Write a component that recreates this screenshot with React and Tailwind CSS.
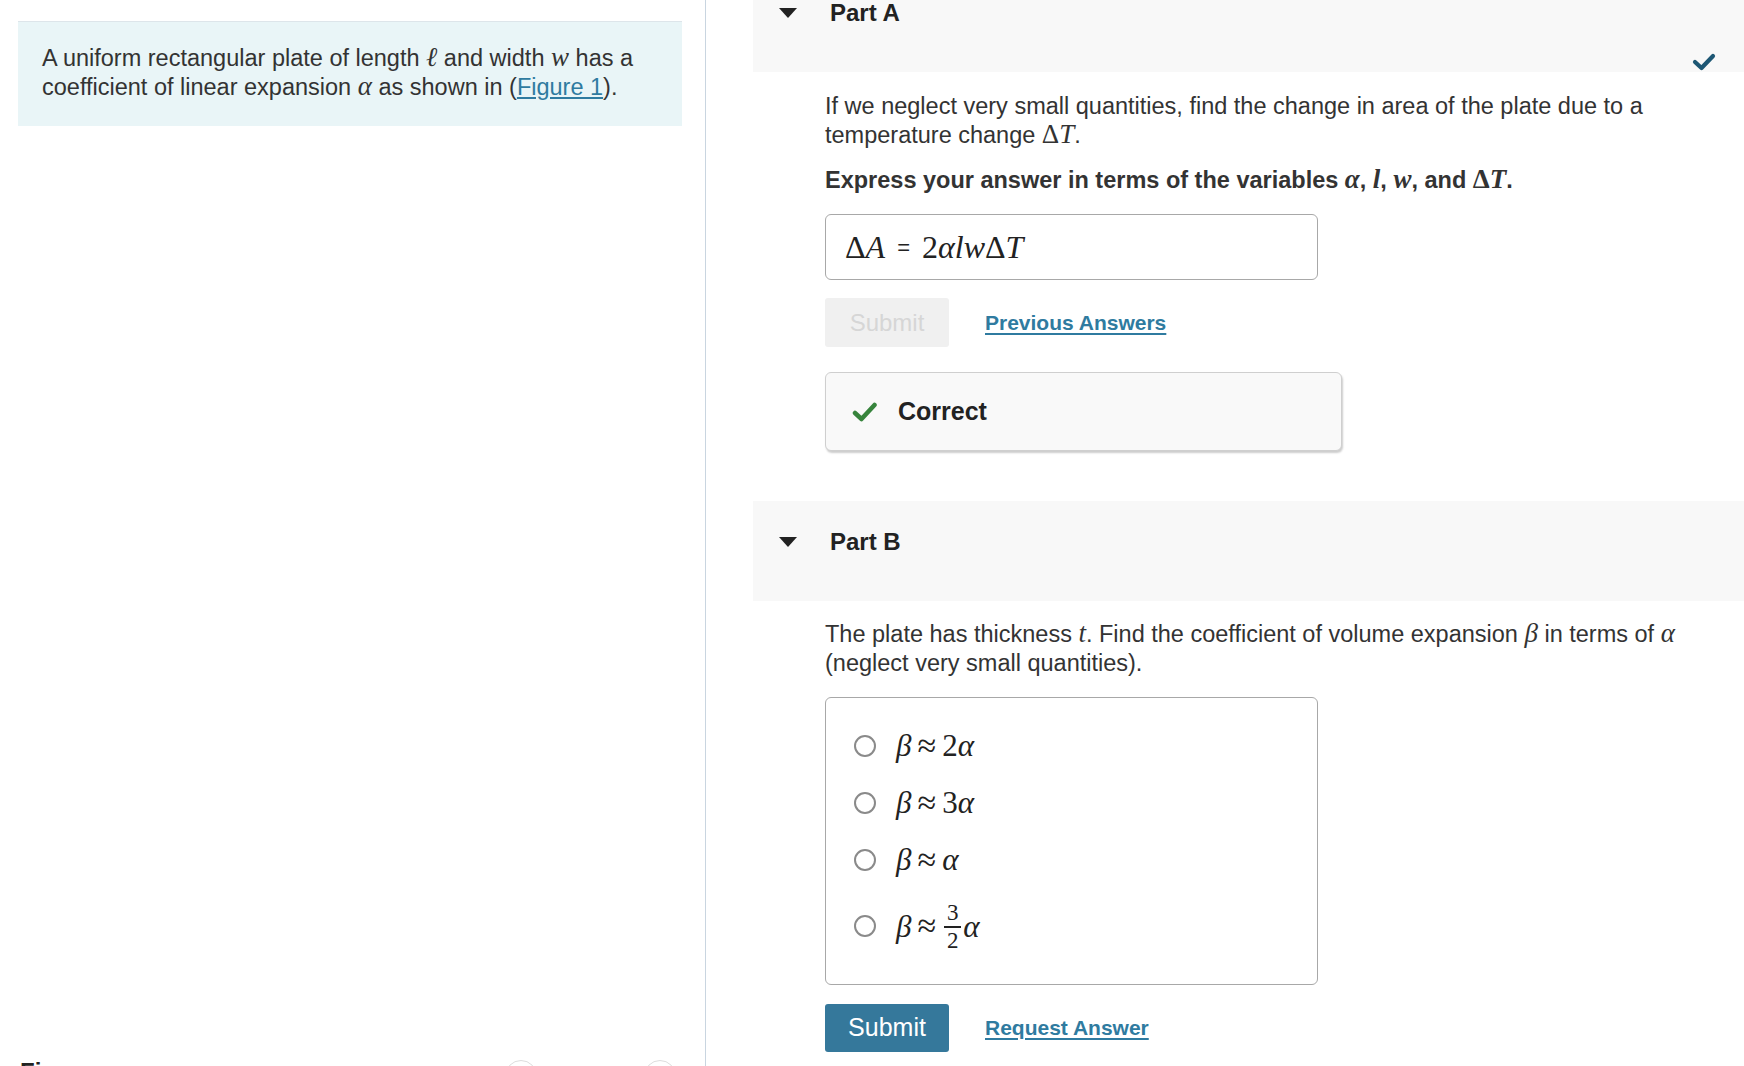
import React from 'react';

const sans = { fontFamily: "'Liberation Sans', Arial, sans-serif" };
const math = { fontFamily: "'Liberation Serif', 'DejaVu Serif', serif" };

function M({ children, italic = true }) {
  return (
    <span style={math} className={`text-[1.15em] leading-none ${italic ? 'italic' : ''}`}>
      {children}
    </span>
  );
}

function Caret() {
  return (
    <svg width="20" height="12" viewBox="0 0 20 12" className="shrink-0">
      <path d="M1 1 L19 1 L10 11 Z" fill="#222" />
    </svg>
  );
}

function PartHeader({ title, done }) {
  return (
    <div className="relative h-[100px] bg-[#f8f8f8] flex items-start pt-[29px] pl-[25px]">
      <div className="flex items-center h-[24px] gap-[32px]">
        <Caret />
        <span className="text-[24px] font-bold text-[#222]">{title}</span>
      </div>
      {done && (
        <svg
          width="24"
          height="20"
          viewBox="0 0 24 20"
          className="absolute right-[28px] bottom-[0px]"
        >
          <path d="M3 10 L9.5 16 L21 4" stroke="#1d5774" strokeWidth="4.2" fill="none" strokeLinecap="round" strokeLinejoin="round" />
        </svg>
      )}
    </div>
  );
}

function Radio({ children, h }) {
  return (
    <label className={`flex items-center gap-[20px] ${h}`}>
      <span className="w-[22px] h-[22px] rounded-full border-2 border-[#8a8a8a] bg-white shrink-0" />
      <span style={math} className="text-[31px] leading-none text-[#222] flex items-center">
        {children}
      </span>
    </label>
  );
}

function Approx() {
  return <span className="mx-[6px] not-italic text-[34px] leading-none">≈</span>;
}

function Frac({ n, d }) {
  return (
    <span className="inline-flex flex-col items-center mx-[2px] leading-none not-italic text-[23px]">
      <span className="pb-[2px]">{n}</span>
      <span className="w-[17px] h-[2px] bg-[#222]" />
      <span className="pt-[1px]">{d}</span>
    </span>
  );
}

export default function App() {
  return (
    <div style={sans} className="h-screen w-full overflow-hidden bg-white flex text-[#333]">
      {/* left column */}
      <div className="w-[706px] shrink-0 border-r border-[#c9d5e0] flex flex-col">
        <div className="shrink-0 ml-[18px] mt-[21px] w-[664px] h-[105px] bg-[#e9f5f7] border-t border-[#dde5ea] pl-[24px] pt-[22px] text-[23.5px] leading-[29px] text-[#333]">
          A uniform rectangular plate of length <M>ℓ</M> and width <M>w</M> has a
          <br />
          coefficient of linear expansion <M>α</M> as shown in (
          <a className="text-[#2f7ba0] underline underline-offset-2">Figure 1</a>).
        </div>
        <div className="shrink-0 mt-[928px] flex items-start pl-[20px] relative">
          <span className="text-[24px] font-bold text-[#222]">Figure</span>
          <span className="absolute left-[505px] top-[6px] w-[32px] h-[32px] rounded-full border border-[#ddd]" />
          <span className="absolute left-[644px] top-[6px] w-[32px] h-[32px] rounded-full border border-[#ddd]" />
        </div>
      </div>

      {/* right column */}
      <div className="flex-1 pl-[47px] flex flex-col">
        <div className="-mt-[28px]">
          <PartHeader title="Part A" done />
        </div>
        <div className="pl-[72px] pt-[20px] pr-[40px]">
          <p className="text-[23.5px] leading-[29px] text-[#333]">
            If we neglect very small quantities, find the change in area of the plate due to a
            <br />
            temperature change <M italic={false}>Δ</M><M>T</M>.
          </p>
          <p className="mt-[16px] text-[23.5px] leading-[29px] font-bold text-[#333]">
            Express your answer in terms of the variables <M>α</M>, <M>l</M>, <M>w</M>, and{' '}
            <M italic={false}>Δ</M><M>T</M>.
          </p>
          <div className="mt-[19px] w-[493px] h-[66px] border border-[#a8a8a8] rounded-[6px] flex items-center pl-[19px] text-[32px] text-[#222]">
            <span style={math}>Δ<i>A</i></span>
            <span className="mx-[12px] text-[22px]" style={sans}>=</span>
            <span style={math}>2<i>αlw</i>Δ<i>T</i></span>
          </div>
          <div className="mt-[18px] flex items-center gap-[36px]">
            <button className="w-[124px] h-[49px] rounded-[3px] bg-[#f0f0f0] text-[#d6d6d6] text-[24px]">
              Submit
            </button>
            <a className="text-[21px] font-bold text-[#2f7ba0] underline underline-offset-[3px]">
              Previous Answers
            </a>
          </div>
          <div className="mt-[25px] w-[517px] h-[79px] rounded-[6px] border border-[#cfcfcf] bg-[#f9f9f9] shadow-[1px_2px_2px_rgba(0,0,0,0.2)] flex items-center pl-[26px] gap-[20px]">
            <svg width="26" height="22" viewBox="0 0 26 22">
              <path d="M3 12 L9.5 18 L22.5 4" stroke="#37843c" strokeWidth="4.5" fill="none" strokeLinecap="round" strokeLinejoin="round" />
            </svg>
            <span className="text-[25px] font-bold text-[#222]">Correct</span>
          </div>
        </div>

        <div className="mt-[50px]">
          <PartHeader title="Part B" />
        </div>
        <div className="pl-[72px] pt-[19px] pr-[20px]">
          <p className="text-[23.5px] leading-[29px] text-[#333]">
            The plate has thickness <M>t</M>. Find the coefficient of volume expansion <M>β</M> in terms of <M>α</M>
            <br />
            (neglect very small quantities).
          </p>
          <div className="mt-[19px] w-[493px] h-[288px] border border-[#a8a8a8] rounded-[6px] pl-[28px] pt-[19px] flex flex-col">
            <Radio h="h-[57px]">
              <i>β</i>
              <Approx />2<i>α</i>
            </Radio>
            <Radio h="h-[57px]">
              <i>β</i>
              <Approx />3<i>α</i>
            </Radio>
            <Radio h="h-[57px]">
              <i>β</i>
              <Approx />
              <i>α</i>
            </Radio>
            <Radio h="h-[76px]">
              <i>β</i>
              <Approx />
              <Frac n="3" d="2" />
              <i>α</i>
            </Radio>
          </div>
          <div className="mt-[19px] flex items-center gap-[36px]">
            <button className="w-[124px] h-[48px] rounded-[3px] bg-[#35789b] text-white text-[25px]">
              Submit
            </button>
            <a className="text-[21px] font-bold text-[#2f7ba0] underline underline-offset-[3px]">
              Request Answer
            </a>
          </div>
        </div>
      </div>
    </div>
  );
}
